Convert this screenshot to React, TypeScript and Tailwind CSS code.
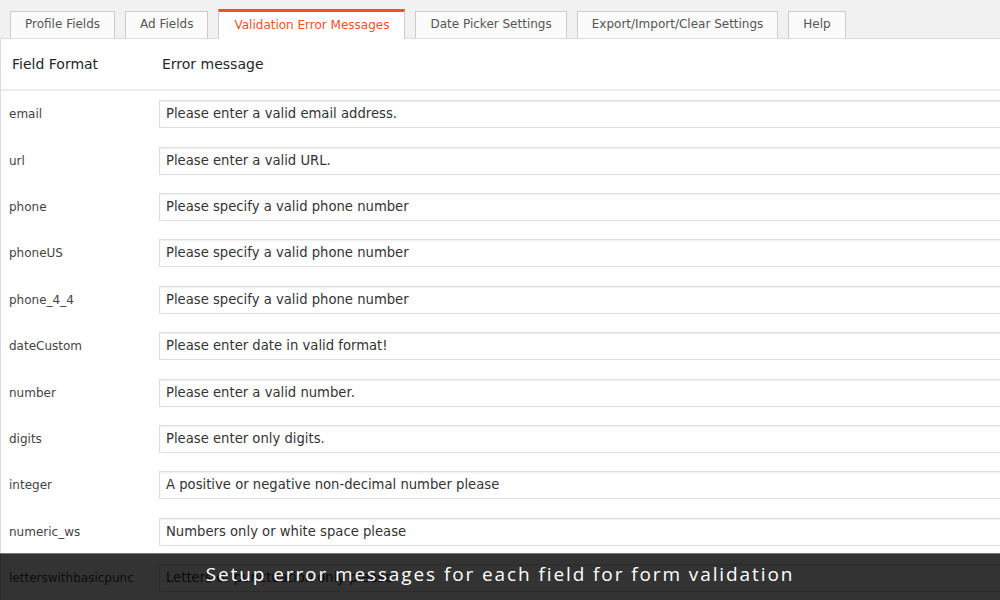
import React from "react";

const tabs = [
  "Profile Fields",
  "Ad Fields",
  "Validation Error Messages",
  "Date Picker Settings",
  "Export/Import/Clear Settings",
  "Help",
];

const rows = [
  ["email", "Please enter a valid email address."],
  ["url", "Please enter a valid URL."],
  ["phone", "Please specify a valid phone number"],
  ["phoneUS", "Please specify a valid phone number"],
  ["phone_4_4", "Please specify a valid phone number"],
  ["dateCustom", "Please enter date in valid format!"],
  ["number", "Please enter a valid number."],
  ["digits", "Please enter only digits."],
  ["integer", "A positive or negative non-decimal number please"],
  ["numeric_ws", "Numbers only or white space please"],
  ["letterswithbasicpunc", "Letters or punctuation only please"],
];

export default function App() {
  return (
    <div
      className="relative w-[1000px] h-[600px] overflow-hidden bg-[#f1f1f1]"
      style={{ fontFamily: "Verdana, 'DejaVu Sans', sans-serif" }}
    >
      {/* tabs */}
      <div className="flex items-end gap-[10px] pl-[10px] h-[38px]">
        {tabs.map((t) => {
          const active = t === "Validation Error Messages";
          return (
            <div
              key={t}
              className={
                active
                  ? "relative z-10 h-[30px] px-[15px] pb-[2px] flex items-center bg-white border-x border-[#ccc] border-t-[3px] border-t-[#f4511e] text-[12px] text-[#f4511e] mb-[-1px]"
                  : "h-[27px] px-[14px] pb-[2px] flex items-center bg-[#fbfbfb] border border-b-0 border-[#ccc] text-[12px] text-[#555]"
              }
            >
              {t}
            </div>
          );
        })}
      </div>

      {/* panel */}
      <div className="bg-white border-t border-l border-[#dcdcdc] w-[1020px]">
        <div className="flex items-center h-[52px] border-b-2 border-[#ececec] text-[14px] text-[#23282d]">
          <div className="w-[161px] pl-[11px]">Field Format</div>
          <div>Error message</div>
        </div>
        <div>
          {rows.map(([k, v]) => (
            <div key={k} className="flex items-center h-[46.4px]">
              <div className="w-[158px] pl-[8px] text-[12px] text-[#444]">{k}</div>
              <div className="h-[28px] w-[860px] flex items-center px-[6px] border border-[#dddddd] shadow-[inset_0_1px_2px_rgba(0,0,0,0.07)] text-[13.2px] text-[#333]">
                {v}
              </div>
            </div>
          ))}
        </div>
      </div>

      {/* caption */}
      <div className="absolute left-0 right-0 bottom-0 h-[47px] pb-[5px] bg-black/80 border-t border-[#777] flex items-center justify-center">
        <span
          className="text-white text-[19px] tracking-[0.1em]"
          style={{ fontFamily: "'Open Sans', sans-serif" }}
        >
          Setup error messages for each field for form validation
        </span>
      </div>
    </div>
  );
}
